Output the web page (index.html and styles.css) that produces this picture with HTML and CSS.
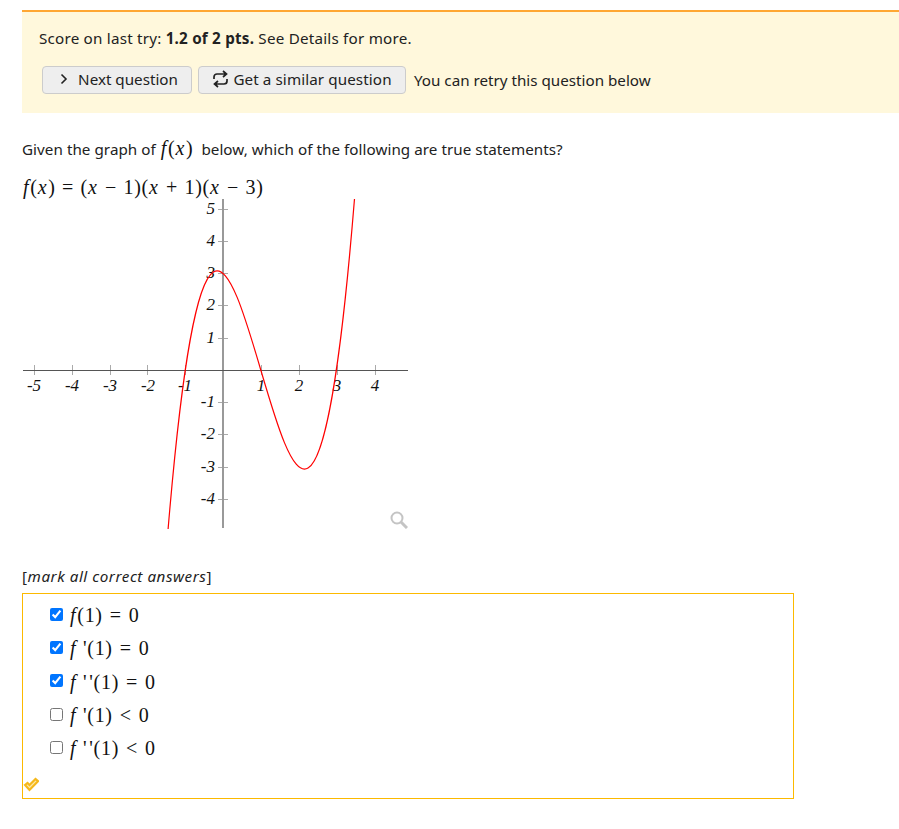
FILE: index.html
```html
<!DOCTYPE html>
<html lang="en">
    <head>
        <meta charset="UTF-8" />
        <meta name="viewport" content="width=device-width, initial-scale=1.0" />
        <title>Question</title>
        <link rel="stylesheet" href="styles.css">
    </head>
    <body>
        <!-- score banner -->
        <div class="banner">
            <p class="score">Score on last try: <b>1.2 of 2 pts.</b> See Details for more.</p>
            <div class="actions">
                <button class="btn btn-next">
                    <svg class="btn-icon" width="10" height="14" viewBox="0 0 10 14"><path d="M2.500 2.500 7 7 2.500 11.500" fill="none" stroke="#222" stroke-width="1.600"/></svg>
                    Next question
                </button>
                <button class="btn btn-similar">
                    <svg class="btn-icon" width="17" height="18" viewBox="0 0 17 18"><path d="M2 9V7a3 3 0 0 1 3-3h9M11 1l3.500 3L11 7M15 9v2a3 3 0 0 1-3 3H3M6 11l-3.500 3L6 17" fill="none" stroke="#222" stroke-width="1.700"/></svg>
                    Get a similar question
                </button>
                <span class="retry">You can retry this question below</span>
            </div>
        </div>

        <p class="prompt">Given the graph of <span class="math math-inline"><i>f</i>(<i>x</i>)</span> below, which of the following are true statements?</p>

        <p class="formula math"><i>f</i>(<i>x</i>)<span class="op">=</span>(<i>x</i><span class="op">−</span>1)(<i>x</i><span class="op">+</span>1)(<i>x</i><span class="op">−</span>3)</p>

        <svg class="graph" width="386" height="330" viewBox="22 199 386 330">
            <g class="ticks">
                <path d="M34.500 365v10M72.500 365v10M110.500 365v10M147.500 365v10M185.500 365v10M261.500 365v10M299.500 365v10M337.500 365v10M375.500 365v10"/>
                <path d="M218 209.500h10M218 241.500h10M218 273.500h10M218 305.500h10M218 338.500h10M218 402.500h10M218 434.500h10M218 467.500h10M218 499.500h10"/>
            </g>
            <path class="axis-y" d="M223 199V528"/>
            <path class="axis-x" d="M23 370.500H408"/>
            <g class="labels">
                <text x="34" y="391">-5</text>
                <text x="72" y="391">-4</text>
                <text x="110" y="391">-3</text>
                <text x="148" y="391">-2</text>
                <text x="185" y="391">-1</text>
                <text x="261" y="391">1</text>
                <text x="299" y="391">2</text>
                <text x="337" y="391">3</text>
                <text x="375" y="391">4</text>
            </g>
            <g class="labels labels-y">
                <text x="215" y="214">5</text>
                <text x="215" y="246">4</text>
                <text x="215" y="278">3</text>
                <text x="215" y="310">2</text>
                <text x="215" y="343">1</text>
                <text x="215" y="407">-1</text>
                <text x="215" y="439">-2</text>
                <text x="215" y="472">-3</text>
                <text x="215" y="504">-4</text>
            </g>
            <path class="curve" d="M166.300 551.100C229.300 -240.400 292.300 980.400 355.300 188.900"/>
            <g class="magnifier">
                <circle cx="397" cy="518" r="5.500"/>
                <path d="M401 522l6 6"/>
            </g>
        </svg>

        <p class="hint">[<i>mark all correct answers</i>]</p>

        <div class="answers">
            <label class="choice"><input type="checkbox" checked /><span class="math"><i>f</i>(1)<span class="op">=</span>0</span></label>
            <label class="choice"><input type="checkbox" checked /><span class="math"><i>f</i> '(1)<span class="op">=</span>0</span></label>
            <label class="choice"><input type="checkbox" checked /><span class="math"><i>f</i> '<span class="prime">'</span>(1)<span class="op">=</span>0</span></label>
            <label class="choice"><input type="checkbox" /><span class="math"><i>f</i> '(1)<span class="op">&lt;</span>0</span></label>
            <label class="choice"><input type="checkbox" /><span class="math"><i>f</i> '<span class="prime">'</span>(1)<span class="op">&lt;</span>0</span></label>
            <svg class="partial" width="16" height="15" viewBox="0 0 16 15"><path d="M2 8l2.500-2 2 2L12.500 2 15 4.200 6.500 13z" fill="#fde9a8" stroke="#f5b81c" stroke-width="2.200"/></svg>
        </div>
    </body>
</html>
```

FILE: styles.css
```css
body {
    margin: 0;
    padding: 10px 0 0 22px;
    font-family: "Noto Sans", "Open Sans", sans-serif;
    font-size: 15.200px;
    color: #222;
    background-color: #fff;
}

p {
    margin: 0;
}

.banner {
    height: 101px;
    padding: 0 17px;
    border-top: 2px solid #ffa733;
    background-color: #fff8dc;
}

.score {
    padding-top: 16px;
    line-height: 21px;
    letter-spacing: 0.220px;
}

.actions {
    display: flex;
    align-items: center;
    margin: 17px 0 0 3px;
}

.btn {
    display: flex;
    align-items: center;
    justify-content: center;
    height: 28px;
    padding: 0 0 2px;
    font-family: inherit;
    font-size: 15.200px;
    color: #222;
    background-color: #eee;
    border: 1px solid #ccc;
    border-radius: 4px;
}

.btn-next {
    width: 150px;
    gap: 9px;
    margin-right: 6px;
    padding-left: 3px;
}

.btn-similar {
    width: 208px;
    gap: 4px;
    margin-right: 8px;
    letter-spacing: 0.100px;
}

.prompt {
    margin-top: 24px;
    line-height: 22px;
    letter-spacing: 0.050px;
}

.math {
    font-family: "Liberation Serif", serif;
    font-size: 20px;
    color: #111;
    letter-spacing: 0.700px;
    white-space: pre;
}

.math i {
    margin-right: 1px;
}

.math-inline {
    margin: 0 4px 0 1px;
}

.op {
    margin: 0 7px;
}

.prime {
    margin-left: 2px;
}

.formula {
    margin-top: 15px;
    padding-left: 1px;
    line-height: 24px;
}

.formula .op {
    margin: 0 6.500px;
}

.graph {
    display: block;
    overflow: hidden;
}

.ticks path {
    fill: none;
    stroke: #aaa;
}

.axis-y {
    stroke: #999;
    stroke-width: 2;
}

.axis-x {
    stroke: #555;
}

.labels text {
    font-family: "Liberation Serif", serif;
    font-size: 17px;
    font-style: italic;
    fill: #111;
    text-anchor: middle;
}

.labels-y text {
    text-anchor: end;
}

.curve {
    fill: none;
    stroke: #f00;
    stroke-width: 1.200;
}

.magnifier {
    fill: none;
    stroke: #c4c4c4;
    stroke-width: 2;
}

.magnifier path {
    stroke-width: 3;
}

.hint {
    margin-top: 37px;
    line-height: 20px;
    letter-spacing: 0.550px;
}

.answers {
    box-sizing: border-box;
    width: 772px;
    height: 206px;
    margin-top: 7px;
    padding: 5px 0 0 27px;
    border: 1px solid #fcb900;
}

.choice {
    display: flex;
    align-items: center;
    height: 33.300px;
}

.choice input {
    margin: 0 7px 3px 0;
    accent-color: #0075ff;
}

.partial {
    display: block;
    margin: 12px 0 0 -27px;
}
```
